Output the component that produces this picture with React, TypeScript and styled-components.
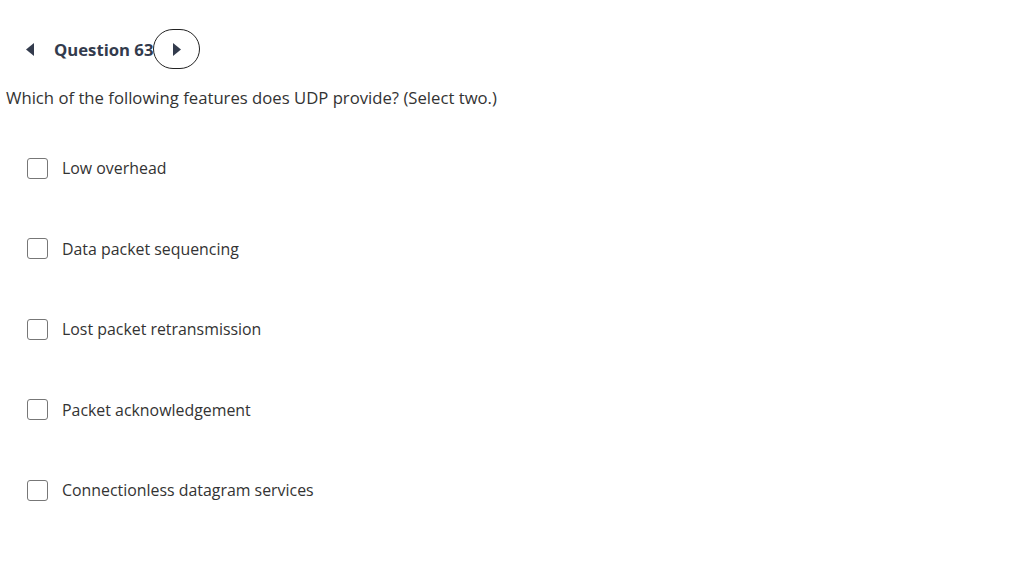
import React from "react";
import styled, { createGlobalStyle } from "styled-components";

const Global = createGlobalStyle`
  html, body { margin: 0; padding: 0; background: #fff; }
  body { font-family: "Open Sans", "Liberation Sans", sans-serif; }
`;

const Page = styled.div`
  padding: 29px 6px 0 6px;
`;

const Header = styled.div`
  display: flex;
  align-items: center;
  height: 40px;
  padding-left: 20px;
`;

const NavArrow = styled.button<{ $outlined?: boolean }>`
  display: flex;
  align-items: center;
  justify-content: center;
  background: transparent;
  padding: 0;
  cursor: pointer;
  color: #333b4d;
  box-sizing: border-box;
  ${(p) =>
    p.$outlined
      ? `width: 47px; height: 40px; border: 1px solid #222; border-radius: 20px; margin-left: 0;`
      : `width: 8px; height: 40px; border: none; margin-right: 20px;`}
`;

const Title = styled.h2`
  margin: 0;
  font-size: 16.7px;
  font-weight: 700;
  color: #333b4d;
  letter-spacing: 0;
`;

const Prompt = styled.p`
  margin: 18px 0 0 0;
  font-size: 16.7px;
  color: #333;
  line-height: 22px;
`;

const Options = styled.ul`
  list-style: none;
  margin: 48px 0 0 0;
  padding: 0 0 0 21px;
  display: flex;
  flex-direction: column;
  gap: 58.5px;
`;

const Option = styled.li`
  display: flex;
  align-items: center;
  height: 22px;
`;

const Box = styled.span`
  width: 21px;
  height: 21px;
  box-sizing: border-box;
  border: 1.5px solid #777;
  border-radius: 3px;
  background: #fff;
  margin-right: 14px;
  flex: none;
`;

const Label = styled.span`
  font-size: 15.9px;
  color: #333;
`;

const Tri = ({ dir }: { dir: "left" | "right" }) => (
  <svg width="8" height="13" viewBox="0 0 8 13">
    {dir === "left" ? (
      <path d="M8 0 L0 6.5 L8 13 Z" fill="currentColor" />
    ) : (
      <path d="M0 0 L8 6.5 L0 13 Z" fill="currentColor" />
    )}
  </svg>
);

const options = [
  "Low overhead",
  "Data packet sequencing",
  "Lost packet retransmission",
  "Packet acknowledgement",
  "Connectionless datagram services",
];

export default function App() {
  return (
    <>
      <Global />
      <Page>
        <Header>
          <NavArrow aria-label="Previous">
            <Tri dir="left" />
          </NavArrow>
          <Title>Question 63</Title>
          <NavArrow $outlined aria-label="Next">
            <Tri dir="right" />
          </NavArrow>
        </Header>
        <Prompt>Which of the following features does UDP provide? (Select two.)</Prompt>
        <Options>
          {options.map((o) => (
            <Option key={o}>
              <Box />
              <Label>{o}</Label>
            </Option>
          ))}
        </Options>
      </Page>
    </>
  );
}
